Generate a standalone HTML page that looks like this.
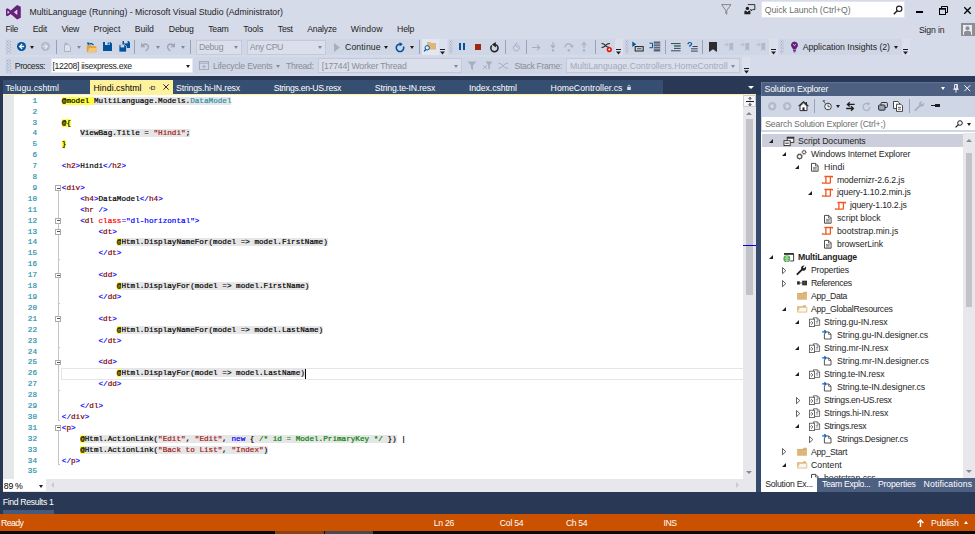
<!DOCTYPE html><html><head><meta charset="utf-8"><title>MultiLanguage (Running) - Microsoft Visual Studio (Administrator)</title><style>
*{box-sizing:border-box}
html,body{margin:0;padding:0}
body{width:975px;height:534px;overflow:hidden;position:relative;background:#D6DBE9;font-family:"Liberation Sans",sans-serif;font-size:8.7px;color:#1E1E1E;line-height:11px}
.a{position:absolute}
.t{position:absolute;white-space:pre;height:11px;line-height:11px}
.g{color:#8C8E98}
.w{color:#fff}
.sep{position:absolute;width:1px;height:14px;background:#98A1B8;top:39px}
.grip{position:absolute;width:4.4px;height:14px;background-image:radial-gradient(circle,#98A2BC 0.55px,transparent 0.8px),radial-gradient(circle,#98A2BC 0.55px,transparent 0.8px);background-size:2.9px 2.9px;background-position:0 0,1.45px 1.45px}
.dd{position:absolute;width:0;height:0;border-left:2.5px solid transparent;border-right:2.5px solid transparent;border-top:3px solid #1E1E1E}
.dd.g{border-top-color:#868995}
.ovf{position:absolute;width:5px;height:5px}
.cb{position:absolute;border:1px solid #C3CADB;background:#DADFEB;height:15px}
.cbw{position:absolute;border:1px solid #E5E9F3;background:#fff;height:15px}
.code{position:absolute;left:0;top:0;font-family:"Liberation Mono",monospace;font-size:7.652px;line-height:10.88px;white-space:pre;color:#000}
.ln{position:absolute;left:14px;width:23px;text-align:right;color:#2B91AF;-webkit-text-stroke:0.2px;font-family:"Liberation Mono",monospace;font-size:7.652px;line-height:10.905px;height:10.905px}
.cl{position:absolute;left:61.8px;height:10.905px;font-family:"Liberation Mono",monospace;font-size:7.652px;line-height:10.905px;white-space:pre;color:#000;-webkit-text-stroke:0.2px}
.y{background:#FFFF3C}
.r{background:#E6E6E6}
.b{color:#0000FF}.m{color:#800000}.rd{color:#FF0000}.s{color:#A31515}.ty{color:#2B91AF}.cm{color:#008000}
.ob{position:absolute;width:5.6px;height:5.6px;border:0.8px solid #ABABAB;background:#fff}
.ob:before{content:"";position:absolute;left:0.5px;top:1.2px;width:3px;height:0.8px;background:#555}
.ol{position:absolute;width:0.9px;background:#C6C6C6}
.tr{position:absolute;left:762px;width:201px;height:12.97px}
.tt{position:absolute;white-space:pre;line-height:12.97px;height:12.97px;top:0.4px}
.fa{position:absolute;width:0;height:0;border-left:4.9px solid transparent;border-bottom:4.7px solid #1E1E1E}
.ha{position:absolute;width:5px;height:8px}
svg{position:absolute;overflow:visible}
</style></head><body>
<svg style="left:6.4px;top:5px" width="15" height="14.5" viewBox="0 0 15 14.5"><path d="M11.1 0 L14.8 1.8 V12.7 L11.1 14.5 L4.7 8.9 L1.6 11.2 L0 10.4 V4.1 L1.6 3.3 L4.7 5.6 Z M11.3 4.5 L7.9 7.25 L11.3 10 Z M1.5 5.6 V8.9 L3.6 7.25 Z" fill="#68217A" fill-rule="evenodd"/></svg>
<span class="t " style="left:29.5px;top:7.35px;letter-spacing:0.010px;">MultiLanguage (Running) - Microsoft Visual Studio (Administrator)</span>
<svg style="left:721px;top:4px" width="11" height="11" viewBox="0 0 11 11"><path d="M0.6 0.6h9.4L5.8 6.4v3.8L4.8 9.4V6.4z" fill="none" stroke="#707070" stroke-width="0.8" stroke-linejoin="round"/></svg>
<svg style="left:743.5px;top:4px" width="12" height="11" viewBox="0 0 12 11"><path d="M3.8 0.6h7v5h-2.2l-1.4 1.4v-1.4h-1" fill="none" stroke="#1E1E1E" stroke-width="0.9"/><circle cx="3.4" cy="4.4" r="1.7" fill="#1E1E1E"/><path d="M0.4 10.2v-2.4q0-1.2 1.4-1.2l1.6 1.4l1.6-1.4q1.4 0 1.4 1.2v2.4z" fill="#1E1E1E"/></svg>
<div class="a" style="left:761.6px;top:1.8px;width:142.8px;height:14.9px;background:#fff;box-shadow:0 0 0 0.7px #E9ECF4"></div>
<span class="t " style="left:764.8px;top:5.05px;letter-spacing:-0.037px;color:#6D6D6D">Quick Launch (Ctrl+Q)</span>
<svg style="left:892.5px;top:4.5px" width="10" height="10" viewBox="0 0 10 10"><circle cx="6.2" cy="3.8" r="2.7" fill="none" stroke="#1E1E1E" stroke-width="1.1"/><path d="M4.2 5.8L0.8 9.2" stroke="#1E1E1E" stroke-width="1.5"/></svg>
<div class="a" style="left:916px;top:11px;width:7px;height:2px;background:#000;"></div>
<svg style="left:938.5px;top:5.5px" width="9" height="9" viewBox="0 0 9 9"><path d="M2.5 2.5V0.5H8.5V6.5H6.5" fill="none" stroke="#000" stroke-width="1"/><rect x="0.5" y="2.5" width="6" height="6" fill="none" stroke="#000" stroke-width="1"/><rect x="0.5" y="2.5" width="6" height="1.2" fill="#000"/></svg>
<svg style="left:964px;top:6.5px" width="7" height="7" viewBox="0 0 7 7"><path d="M0.3 0.3L6.7 6.7M6.7 0.3L0.3 6.7" stroke="#000" stroke-width="1.3"/></svg>
<span class="t " style="left:5.4px;top:24.45px;letter-spacing:-0.325px;">File</span>
<span class="t " style="left:32.7px;top:24.45px;letter-spacing:-0.196px;">Edit</span>
<span class="t " style="left:61.4px;top:24.45px;letter-spacing:-0.222px;">View</span>
<span class="t " style="left:93.6px;top:24.45px;letter-spacing:-0.050px;">Project</span>
<span class="t " style="left:134.7px;top:24.45px;letter-spacing:-0.026px;">Build</span>
<span class="t " style="left:168.8px;top:24.45px;letter-spacing:-0.162px;">Debug</span>
<span class="t " style="left:208.3px;top:24.45px;letter-spacing:-0.288px;">Team</span>
<span class="t " style="left:243.3px;top:24.45px;letter-spacing:-0.076px;">Tools</span>
<span class="t " style="left:277.8px;top:24.45px;letter-spacing:-0.259px;">Test</span>
<span class="t " style="left:307.2px;top:24.45px;letter-spacing:-0.203px;">Analyze</span>
<span class="t " style="left:350.7px;top:24.45px;letter-spacing:0.199px;">Window</span>
<span class="t " style="left:397px;top:24.45px;letter-spacing:-0.144px;">Help</span>
<span class="t " style="left:919px;top:24.95px;letter-spacing:-0.183px;">Sign in</span>
<div class="a" style="left:961px;top:23px;width:14px;height:12.5px;background:#8C8E94"></div>
<svg style="left:962.5px;top:24.5px" width="9" height="10" viewBox="0 0 9 10"><rect x="0" y="0" width="9" height="10" fill="#E9ECF3"/><circle cx="4.5" cy="3.3" r="2" fill="#8C8E94"/><path d="M1 10V8q0-2.3 3.5-2.3T8 8v2z" fill="#8C8E94"/></svg>
<div class="a" style="left:5px;top:38.6px;width:434px;height:16.5px;background:#CFD6E5;"></div>
<div class="a" style="left:447.5px;top:38.6px;width:167.0px;height:16.5px;background:#CFD6E5;"></div>
<div class="a" style="left:623px;top:38.6px;width:146px;height:16.5px;background:#CFD6E5;"></div>
<div class="a" style="left:778px;top:38.6px;width:123.5px;height:16.5px;background:#CFD6E5;"></div>
<div class="a" style="left:5px;top:57.3px;width:737px;height:16.4px;background:#CFD6E5;"></div>
<div class="a" style="left:439px;top:38.6px;width:8px;height:16.5px;background:#DCE0EC;"></div>
<div class="a" style="left:614.5px;top:38.6px;width:8.200000000000045px;height:16.5px;background:#DCE0EC;"></div>
<div class="a" style="left:769px;top:38.6px;width:8.600000000000023px;height:16.5px;background:#DCE0EC;"></div>
<div class="a" style="left:901.5px;top:38.6px;width:8.0px;height:16.5px;background:#DCE0EC;"></div>
<div class="a" style="left:742px;top:57.3px;width:8.2px;height:16.4px;background:#DCE0EC;"></div>
<div class="a" style="left:0;top:0.6px;width:975px;height:0">
<div class="grip" style="left:6.3px;top:39px;height:14px"></div>
<svg style="left:16.5px;top:41.5px" width="9" height="9" viewBox="0 0 9 9"><circle cx="4.5" cy="4.5" r="4.5" fill="#00539C"/><path d="M5.2 1.9L2.6 4.5L5.2 7.1M2.8 4.5H7.2" fill="none" stroke="#fff" stroke-width="1.3"/></svg>
<div class="dd " style="left:30.299999999999997px;top:45.0px"></div>
<svg style="left:40.5px;top:41.5px" width="9" height="9" viewBox="0 0 9 9"><circle cx="4.5" cy="4.5" r="4.5" fill="#B4B9C8"/><path d="M3.8 1.9L6.4 4.5L3.8 7.1M6.2 4.5H1.8" fill="none" stroke="#E3E6EF" stroke-width="1.3"/></svg>
<div class="sep" style="left:55.5px;top:39px;height:14px"></div>
<svg style="left:62.5px;top:41px" width="9" height="10" viewBox="0 0 9 10"><path d="M1.5 2.5h4l2 2V9.5h-6z" fill="#DDE1EC" stroke="#A9AFC1" stroke-width="0.9"/><path d="M3 0.3v3M1.5 1.8h3" stroke="#A9AFC1" stroke-width="0.9"/></svg>
<div class="dd g" style="left:77.0px;top:45.0px"></div>
<svg style="left:86px;top:41px" width="11" height="10" viewBox="0 0 11 10"><path d="M0.8 3.2h4l1 1h4.6v6h-9.6z" fill="#E0A23C"/><path d="M1.6 10.2l1.5-4.2h7.9l-1.5 4.2z" fill="#F3C574"/><path d="M3.4 2.4A2.4 2.4 0 0 1 7.4 3.2" fill="none" stroke="#00539C" stroke-width="1.2"/><path d="M0.8 0.6l3.2 0.2l-1.8 2.6z" fill="#00539C"/></svg>
<svg style="left:103px;top:41.5px" width="9" height="9" viewBox="0 0 9 9"><path d="M0 0h7.4L9 1.6V9H0z" fill="#00539C"/><rect x="2" y="0" width="4.6" height="3" fill="#D6DBE9"/><rect x="4.6" y="0.5" width="1.2" height="2" fill="#00539C"/></svg>
<svg style="left:118.5px;top:40.5px" width="11" height="11" viewBox="0 0 11 11"><path d="M3.5 0h6L11 1.5V7H3.5z" fill="#00539C"/><rect x="5" y="0" width="3.6" height="2.4" fill="#D6DBE9"/><path d="M0 3.8h6L7.5 5.3V11H0z" fill="#00539C" stroke="#D6DBE9" stroke-width="0.7"/><rect x="1.6" y="4.1" width="3.6" height="2.3" fill="#D6DBE9"/></svg>
<div class="sep" style="left:134.3px;top:39px;height:14px"></div>
<svg style="left:140.5px;top:41.5px" width="9" height="9" viewBox="0 0 9 9"><path d="M1 4.2q3-3.4 5.6-1.2q2.4 2.2-1.8 6" fill="none" stroke="#A0A6B9" stroke-width="1.5"/><path d="M0 0.6v4.6h4.6z" fill="#A0A6B9"/></svg>
<div class="dd g" style="left:155.5px;top:45.0px"></div>
<svg style="left:165.5px;top:41.5px" width="9" height="9" viewBox="0 0 9 9"><path d="M8 4.2q-3-3.4-5.6-1.2q-2.4 2.2 1.8 6" fill="none" stroke="#A0A6B9" stroke-width="1.5"/><path d="M9 0.6v4.6h-4.6z" fill="#A0A6B9"/></svg>
<div class="dd g" style="left:180.8px;top:45.0px"></div>
<div class="sep" style="left:190.2px;top:39px;height:14px"></div>
<div class="cb" style="left:195.5px;top:39px;width:46.5px"></div>
<span class="t g" style="left:199.1px;top:41.45px;letter-spacing:-0.302px;">Debug</span>
<div class="dd g" style="left:234.3px;top:45.0px"></div>
<div class="cb" style="left:246.5px;top:39px;width:79px"></div>
<span class="t g" style="left:249.8px;top:41.45px;letter-spacing:-0.362px;">Any CPU</span>
<div class="dd g" style="left:318.0px;top:45.0px"></div>
<svg style="left:333.5px;top:42px" width="6" height="9" viewBox="0 0 6 9"><path d="M0 0L6 4.5L0 9z" fill="#A9AEBF"/></svg>
<span class="t " style="left:345px;top:41.45px;letter-spacing:0.127px;">Continue</span>
<div class="dd " style="left:383.7px;top:45.0px"></div>
<svg style="left:394.6px;top:41px" width="10" height="11" viewBox="0 0 10 11"><path d="M8.5 4.6A3.7 3.7 0 1 1 5 2.1" fill="none" stroke="#00539C" stroke-width="1.6"/><path d="M4.6 0L7.8 2.3L4.6 4.6z" fill="#00539C"/></svg>
<div class="dd " style="left:409.5px;top:45.0px"></div>
<div class="sep" style="left:418.8px;top:39px;height:14px"></div>
<div class="a" style="left:422px;top:38.5px;width:17px;height:16px;background:#E3E7F1;"></div>
<svg style="left:424px;top:40.5px" width="12" height="11" viewBox="0 0 12 11"><path d="M3 1h3.4l1 1H12v6.5H3z" fill="#DCB67A"/><circle cx="3.2" cy="6.8" r="2.2" fill="#E3E7F1" stroke="#00539C" stroke-width="1"/><path d="M1.7 8.4L0.2 10.4" stroke="#00539C" stroke-width="1.3"/></svg>
<svg style="left:440.2px;top:48.5px" width="5" height="6" viewBox="0 0 5 6"><rect x="0" y="0" width="5" height="1" fill="#1E1E1E"/><path d="M0 2.5h5L2.5 5.5z" fill="#1E1E1E"/></svg>
<div class="grip" style="left:449px;top:39px;height:14px"></div>
<div class="a" style="left:459.3px;top:42.6px;width:2.1px;height:7.2px;background:#00539C;"></div>
<div class="a" style="left:462.9px;top:42.6px;width:2.1px;height:7.2px;background:#00539C;"></div>
<div class="a" style="left:475.1px;top:43.2px;width:6px;height:6.2px;background:#A1260D;"></div>
<svg style="left:489px;top:41px" width="10" height="11" viewBox="0 0 10 11"><path d="M2.8 3.6A3.6 3.6 0 1 0 6.4 2.6" fill="none" stroke="#1E1E1E" stroke-width="1.5"/><path d="M6.8 0L3 2.6L6.8 5.4z" fill="#1E1E1E"/></svg>
<div class="sep" style="left:504.8px;top:39px;height:14px"></div>
<svg style="left:511.5px;top:41.5px" width="9" height="10" viewBox="0 0 9 10"><path d="M2.2 3.8A3 3 0 1 0 5.2 3" fill="none" stroke="#A9AEBF" stroke-width="1"/><path d="M5.6 0.8L2.6 3L5.6 5.2" fill="none" stroke="#A9AEBF" stroke-width="1"/></svg>
<div class="sep" style="left:525.7px;top:39px;height:14px"></div>
<svg style="left:531.5px;top:43px" width="9" height="7" viewBox="0 0 9 7"><path d="M0 3.5h7.5M5 0.8L7.8 3.5L5 6.2" fill="none" stroke="#A9AEBF" stroke-width="1.1"/></svg>
<svg style="left:550px;top:41.5px" width="6" height="10" viewBox="0 0 6 10"><path d="M3 0v5M0.8 3.2L3 5.6L5.2 3.2" fill="none" stroke="#A9AEBF" stroke-width="1.1"/><circle cx="3" cy="8.4" r="1.2" fill="#A9AEBF"/></svg>
<svg style="left:563.5px;top:41.5px" width="10" height="10" viewBox="0 0 10 10"><path d="M1 5.5q0-3.6 3.6-3.6q3.2 0 3.4 3" fill="none" stroke="#A9AEBF" stroke-width="1.1"/><path d="M6 3.8L8.2 5.4L9.6 3.2" fill="none" stroke="#A9AEBF" stroke-width="1"/><circle cx="4.8" cy="8.4" r="1.2" fill="#A9AEBF"/></svg>
<svg style="left:581.3px;top:41.5px" width="6" height="10" viewBox="0 0 6 10"><path d="M3 6V0.8M0.8 3L3 0.6L5.2 3" fill="none" stroke="#A9AEBF" stroke-width="1.1"/><circle cx="3" cy="8.4" r="1.2" fill="#A9AEBF"/></svg>
<div class="sep" style="left:594.7px;top:39px;height:14px"></div>
<svg style="left:600.5px;top:41px" width="12" height="11" viewBox="0 0 12 11"><path d="M0.5 1.5q2.5 0 4 2t4.5 2M0.5 5.5q2.5 0 4-2t4.5-2" fill="none" stroke="#1E1E1E" stroke-width="1.1"/><circle cx="8.3" cy="7.6" r="2.6" fill="#E51400"/><circle cx="8.3" cy="7.6" r="1" fill="#fff"/></svg>
<svg style="left:616.2px;top:48.5px" width="5" height="6" viewBox="0 0 5 6"><rect x="0" y="0" width="5" height="1" fill="#1E1E1E"/><path d="M0 2.5h5L2.5 5.5z" fill="#1E1E1E"/></svg>
<div class="grip" style="left:625px;top:39px;height:14px"></div>
<svg style="left:631.5px;top:40.5px" width="12" height="11" viewBox="0 0 12 11"><path d="M0.3 0.5L4.2 3.2L0.3 6z" fill="#00539C"/><rect x="3.2" y="5.6" width="8" height="4.4" fill="#D6DBE9" stroke="#1E1E1E" stroke-width="1"/><path d="M5 7.8h4.5" stroke="#1E1E1E" stroke-width="0.8"/></svg>
<svg style="left:648.5px;top:40.5px" width="12" height="11" viewBox="0 0 12 11"><path d="M0.5 2.2h3v4.5h-3" fill="none" stroke="#00539C" stroke-width="1"/><rect x="4.8" y="0.5" width="6.4" height="10" fill="#5B6273"/><path d="M4.8 3h6.4M4.8 5.4h6.4M4.8 7.8h6.4" stroke="#D6DBE9" stroke-width="0.7"/></svg>
<div class="sep" style="left:664.6px;top:39px;height:14px"></div>
<svg style="left:671px;top:42px" width="10" height="9" viewBox="0 0 10 9"><path d="M0 0.6h9.6M3 3h6.6M3 5.4h6.6M0 7.8h9.6" stroke="#3C4356" stroke-width="1"/><path d="M3 3h6.6" stroke="#2E8B57" stroke-width="1"/></svg>
<svg style="left:686.5px;top:41px" width="11" height="10" viewBox="0 0 11 10"><path d="M1 2.2q0-1.7 1.8-1.7t1.8 1.5q0 1-1.8 1.8v1" fill="none" stroke="#00539C" stroke-width="1.2"/><path d="M5.5 4.5h5.2M4 6.8h6.7M4 9.1h6.7" stroke="#3C4356" stroke-width="1"/></svg>
<div class="sep" style="left:702px;top:39px;height:14px"></div>
<svg style="left:709px;top:41px" width="8" height="10" viewBox="0 0 8 10"><path d="M0 0h8v10L4 7.2L0 10z" fill="#2D2D30"/></svg>
<svg style="left:724px;top:41.5px" width="10" height="9" viewBox="0 0 10 9"><path d="M5.4 1h3.8v8L7.3 7.2L5.4 9z" fill="#B3B8C8"/><path d="M0.5 2.6h3.4M2.4 0.8L4.2 2.6L2.4 4.4" fill="none" stroke="#B3B8C8" stroke-width="0.9"/></svg>
<svg style="left:739.8px;top:41.5px" width="10" height="9" viewBox="0 0 10 9"><path d="M5.4 1h3.8v8L7.3 7.2L5.4 9z" fill="#B3B8C8"/><path d="M0.5 2.6h3.4M2.4 0.8L4.2 2.6L2.4 4.4" fill="none" stroke="#B3B8C8" stroke-width="0.9"/></svg>
<svg style="left:755.8px;top:41.5px" width="10" height="9" viewBox="0 0 10 9"><path d="M5.4 1h3.8v8L7.3 7.2L5.4 9z" fill="#B3B8C8"/><path d="M0.5 2.6h3.4M2.4 0.8L4.2 2.6L2.4 4.4" fill="none" stroke="#B3B8C8" stroke-width="0.9"/></svg>
<svg style="left:770.9px;top:48.5px" width="5" height="6" viewBox="0 0 5 6"><rect x="0" y="0" width="5" height="1" fill="#1E1E1E"/><path d="M0 2.5h5L2.5 5.5z" fill="#1E1E1E"/></svg>
<div class="grip" style="left:779.5px;top:39px;height:14px"></div>
<svg style="left:789.5px;top:40.5px" width="9" height="12" viewBox="0 0 9 12"><path d="M4.5 0.5a3.6 3.6 0 0 1 2.2 6.4q-0.6 0.6-0.6 1.6H2.9q0-1-0.6-1.6A3.6 3.6 0 0 1 4.5 0.5z" fill="#68217A"/><path d="M3 9.4h3M3.4 10.8h2.2" stroke="#68217A" stroke-width="1"/><path d="M3.3 3.2l1.2 1.6l1.2-1.6" fill="none" stroke="#fff" stroke-width="0.7"/></svg>
<span class="t " style="left:802.7px;top:41.45px;letter-spacing:-0.025px;">Application Insights (2)</span>
<div class="dd " style="left:893.8px;top:45.0px"></div>
<svg style="left:903.2px;top:48.5px" width="5" height="6" viewBox="0 0 5 6"><rect x="0" y="0" width="5" height="1" fill="#1E1E1E"/><path d="M0 2.5h5L2.5 5.5z" fill="#1E1E1E"/></svg>
</div>
<div class="grip" style="left:6.3px;top:58.5px;height:14px"></div>
<span class="t " style="left:14.8px;top:61.05px;letter-spacing:-0.450px;">Process:</span>
<div class="cbw" style="left:50.5px;top:58.3px;width:142.5px"></div>
<span class="t " style="left:52.5px;top:61.05px;letter-spacing:-0.330px;">[12208] iisexpress.exe</span>
<div class="dd " style="left:185.9px;top:64.5px"></div>
<svg style="left:198.8px;top:61.2px" width="10" height="9" viewBox="0 0 10 9"><rect x="0.5" y="0.5" width="9" height="8" fill="none" stroke="#A0A6B9" stroke-width="0.9"/><path d="M0.5 2.2h9" stroke="#A0A6B9" stroke-width="0.9"/><path d="M5.8 4L3.6 5.6L5.8 7.2M3.8 5.6h3" fill="none" stroke="#A0A6B9" stroke-width="0.8"/></svg>
<span class="t g" style="left:213px;top:61.05px;letter-spacing:-0.205px;">Lifecycle Events</span>
<div class="dd g" style="left:276.1px;top:64.5px"></div>
<span class="t g" style="left:286px;top:61.05px;letter-spacing:-0.336px;">Thread:</span>
<div class="cb" style="left:318px;top:58.3px;width:144px"></div>
<span class="t g" style="left:321.7px;top:61.05px;letter-spacing:-0.197px;">[17744] Worker Thread</span>
<div class="dd g" style="left:454.3px;top:64.5px"></div>
<svg style="left:466.5px;top:61px" width="10" height="10" viewBox="0 0 10 10"><path d="M0.5 0.5h9L6 4.6v4.6L4 7.6v-3z" fill="#A9AEBF"/></svg>
<svg style="left:482.5px;top:61px" width="10" height="10" viewBox="0 0 10 10"><path d="M2.5 0.5h7L6.8 4v4.6L5.2 7.4V4z" fill="#A9AEBF"/><path d="M0 4.4L4 8M4 4.4L0 8" stroke="#A9AEBF" stroke-width="0.9"/></svg>
<svg style="left:498px;top:62px" width="11" height="8" viewBox="0 0 11 8"><path d="M0.5 1.2q2.5 0 4.5 2.6t5 2.6M0.5 6.4q2.5 0 4.5-2.6t5-2.6" fill="none" stroke="#A9AEBF" stroke-width="1"/></svg>
<span class="t g" style="left:514.6px;top:61.05px;letter-spacing:-0.355px;">Stack Frame:</span>
<div class="cb" style="left:566.3px;top:58.3px;width:173.3px"></div>
<span class="t " style="left:570px;top:61.05px;letter-spacing:0.017px;color:#A4A9BA">MultiLanguage.Controllers.HomeControll</span>
<div class="dd g" style="left:731.3px;top:64.5px"></div>
<svg style="left:743.5px;top:67.5px" width="5" height="6" viewBox="0 0 5 6"><rect x="0" y="0" width="5" height="1" fill="#1E1E1E"/><path d="M0 2.5h5L2.5 5.5z" fill="#1E1E1E"/></svg>
<div class="a" style="left:0px;top:75.7px;width:975px;height:438.6px;background:#293955;"></div>
<div class="a" style="left:2.6px;top:80.4px;width:660.4px;height:13.2px;background:#364E6F;"></div>
<span class="t w" style="left:5.4px;top:82.55px;letter-spacing:0.037px;">Telugu.cshtml</span>
<div class="a" style="left:89.8px;top:79.9px;width:82.8px;height:14px;background:#FFF29D;"></div>
<span class="t " style="left:93.5px;top:82.55px;letter-spacing:0.066px;color:#000">Hindi.cshtml</span>
<svg style="left:148.5px;top:84.5px" width="7" height="6" viewBox="0 0 7 6"><path d="M0 3h2.6M2.6 0.8v4.4M2.6 1.6h3.2v2.2M2.6 4.4h3.2" fill="none" stroke="#444" stroke-width="0.8"/></svg>
<svg style="left:162.5px;top:84.3px" width="6" height="6" viewBox="0 0 6 6"><path d="M0.3 0.3L5.7 5.7M5.7 0.3L0.3 5.7" stroke="#1E1E1E" stroke-width="0.9"/></svg>
<span class="t w" style="left:176px;top:82.55px;letter-spacing:-0.146px;">Strings.hi-IN.resx</span>
<span class="t w" style="left:273.7px;top:82.55px;letter-spacing:-0.311px;">Strings.en-US.resx</span>
<span class="t w" style="left:374.8px;top:82.55px;letter-spacing:-0.145px;">String.te-IN.resx</span>
<span class="t w" style="left:469px;top:82.55px;letter-spacing:-0.080px;">Index.cshtml</span>
<span class="t w" style="left:550.6px;top:82.55px;letter-spacing:0.025px;">HomeController.cs</span>
<svg style="left:627px;top:84.5px" width="4" height="5" viewBox="0 0 4 5"><rect x="0.2" y="2" width="3.6" height="3" fill="#D8DDE8"/><path d="M1 2V1.2a1 1 0 0 1 2 0V2" fill="none" stroke="#D8DDE8" stroke-width="0.7"/></svg>
<div class="dd" style="left:748px;top:86px;border-top-color:#fff;border-left-width:3.2px;border-right-width:3.2px;border-top-width:3.4px"></div>
<div class="a" style="left:2.6px;top:93.6px;width:753.4px;height:1.6px;background:#FFF29D;"></div>
<div class="a" style="left:2.6px;top:94.8px;width:753.4px;height:397px;background:#fff;"></div>
<div class="a" style="left:2.6px;top:94.8px;width:11.6px;height:383.8px;background:#E6E7E8;"></div>
<div class="a" style="left:61px;top:368.02px;width:682px;height:11.50px;border:1px solid #E4E4EA;border-right:0"></div>
<div class="ln" style="top:95.70px">1</div>
<div class="cl" style="top:95.70px"><span class="y">@model </span><span class="r">MultiLanguage.Models.<span class="ty">DataModel</span></span></div>
<div class="ln" style="top:106.60px">2</div>
<div class="ln" style="top:117.51px">3</div>
<div class="cl" style="top:117.51px"><span class="y">@{</span></div>
<div class="ln" style="top:128.41px">4</div>
<div class="cl" style="top:128.41px">    <span class="r">ViewBag.Title = <span class="s">&quot;Hindi&quot;</span>;</span></div>
<div class="ln" style="top:139.32px">5</div>
<div class="cl" style="top:139.32px"><span class="y">}</span></div>
<div class="ln" style="top:150.22px">6</div>
<div class="ln" style="top:161.13px">7</div>
<div class="cl" style="top:161.13px"><span class="b">&lt;</span><span class="m">h2</span><span class="b">&gt;</span>Hindi<span class="b">&lt;/</span><span class="m">h2</span><span class="b">&gt;</span></div>
<div class="ln" style="top:172.03px">8</div>
<div class="ln" style="top:182.94px">9</div>
<div class="cl" style="top:182.94px"><span class="b">&lt;</span><span class="m">div</span><span class="b">&gt;</span></div>
<div class="ln" style="top:193.84px">10</div>
<div class="cl" style="top:193.84px">    <span class="b">&lt;</span><span class="m">h4</span><span class="b">&gt;</span>DataModel<span class="b">&lt;/</span><span class="m">h4</span><span class="b">&gt;</span></div>
<div class="ln" style="top:204.75px">11</div>
<div class="cl" style="top:204.75px">    <span class="b">&lt;</span><span class="m">hr</span><span class="b"> /&gt;</span></div>
<div class="ln" style="top:215.65px">12</div>
<div class="cl" style="top:215.65px">    <span class="b">&lt;</span><span class="m">dl</span> <span class="rd">class</span><span class="b">=&quot;dl-horizontal&quot;&gt;</span></div>
<div class="ln" style="top:226.56px">13</div>
<div class="cl" style="top:226.56px">        <span class="b">&lt;</span><span class="m">dt</span><span class="b">&gt;</span></div>
<div class="ln" style="top:237.46px">14</div>
<div class="cl" style="top:237.46px">            <span class="y">@</span><span class="r">Html.DisplayNameFor(model =&gt; model.FirstName)</span></div>
<div class="ln" style="top:248.37px">15</div>
<div class="cl" style="top:248.37px">        <span class="b">&lt;/</span><span class="m">dt</span><span class="b">&gt;</span></div>
<div class="ln" style="top:259.27px">16</div>
<div class="ln" style="top:270.18px">17</div>
<div class="cl" style="top:270.18px">        <span class="b">&lt;</span><span class="m">dd</span><span class="b">&gt;</span></div>
<div class="ln" style="top:281.08px">18</div>
<div class="cl" style="top:281.08px">            <span class="y">@</span><span class="r">Html.DisplayFor(model =&gt; model.FirstName)</span></div>
<div class="ln" style="top:291.99px">19</div>
<div class="cl" style="top:291.99px">        <span class="b">&lt;/</span><span class="m">dd</span><span class="b">&gt;</span></div>
<div class="ln" style="top:302.89px">20</div>
<div class="ln" style="top:313.80px">21</div>
<div class="cl" style="top:313.80px">        <span class="b">&lt;</span><span class="m">dt</span><span class="b">&gt;</span></div>
<div class="ln" style="top:324.70px">22</div>
<div class="cl" style="top:324.70px">            <span class="y">@</span><span class="r">Html.DisplayNameFor(model =&gt; model.LastName)</span></div>
<div class="ln" style="top:335.61px">23</div>
<div class="cl" style="top:335.61px">        <span class="b">&lt;/</span><span class="m">dt</span><span class="b">&gt;</span></div>
<div class="ln" style="top:346.51px">24</div>
<div class="ln" style="top:357.42px">25</div>
<div class="cl" style="top:357.42px">        <span class="b">&lt;</span><span class="m">dd</span><span class="b">&gt;</span></div>
<div class="ln" style="top:368.32px">26</div>
<div class="cl" style="top:368.32px">            <span class="y">@</span><span class="r">Html.DisplayFor(model =&gt; model.LastName)</span></div>
<div class="ln" style="top:379.23px">27</div>
<div class="cl" style="top:379.23px">        <span class="b">&lt;/</span><span class="m">dd</span><span class="b">&gt;</span></div>
<div class="ln" style="top:390.13px">28</div>
<div class="ln" style="top:401.04px">29</div>
<div class="cl" style="top:401.04px">    <span class="b">&lt;/</span><span class="m">dl</span><span class="b">&gt;</span></div>
<div class="ln" style="top:411.94px">30</div>
<div class="cl" style="top:411.94px"><span class="b">&lt;/</span><span class="m">div</span><span class="b">&gt;</span></div>
<div class="ln" style="top:422.85px">31</div>
<div class="cl" style="top:422.85px"><span class="b">&lt;</span><span class="m">p</span><span class="b">&gt;</span></div>
<div class="ln" style="top:433.75px">32</div>
<div class="cl" style="top:433.75px">    <span class="y">@</span><span class="r">Html.ActionLink(<span class="s">&quot;Edit&quot;</span>, <span class="s">&quot;Edit&quot;</span>, <span class="b">new</span> { <span class="cm">/* id = Model.PrimaryKey */</span> })</span> |</div>
<div class="ln" style="top:444.66px">33</div>
<div class="cl" style="top:444.66px">    <span class="y">@</span><span class="r">Html.ActionLink(<span class="s">&quot;Back to List&quot;</span>, <span class="s">&quot;Index&quot;</span>)</span></div>
<div class="ln" style="top:455.56px">34</div>
<div class="cl" style="top:455.56px"><span class="b">&lt;/</span><span class="m">p</span><span class="b">&gt;</span></div>
<div class="ln" style="top:466.47px">35</div>
<div class="a" style="left:304.9px;top:368.92px;width:0.9px;height:9.6px;background:#000"></div>
<div class="ol" style="left:57.5px;top:188.39px;height:232.00px"></div>
<div class="ol" style="left:57.9px;top:420.00px;height:0.8px;width:2.5px"></div>
<div class="ol" style="left:57.5px;top:428.30px;height:35.71px"></div>
<div class="ol" style="left:57.9px;top:463.61px;height:0.8px;width:2.5px"></div>
<div class="ob" style="left:55.1px;top:185.39px"></div>
<div class="ob" style="left:55.1px;top:218.10px"></div>
<div class="ob" style="left:55.1px;top:229.01px"></div>
<div class="ob" style="left:55.1px;top:272.63px"></div>
<div class="ob" style="left:55.1px;top:316.25px"></div>
<div class="ob" style="left:55.1px;top:359.87px"></div>
<div class="ob" style="left:55.1px;top:425.30px"></div>
<div class="ol" style="left:57.9px;top:259.32px;height:0.8px;width:2.6px"></div>
<div class="ol" style="left:57.9px;top:302.94px;height:0.8px;width:2.6px"></div>
<div class="ol" style="left:57.9px;top:346.56px;height:0.8px;width:2.6px"></div>
<div class="ol" style="left:57.9px;top:390.19px;height:0.8px;width:2.6px"></div>
<div class="a" style="left:743px;top:94.8px;width:13px;height:383.8px;background:#E8E8EC;"></div>
<div class="a" style="left:743.3px;top:95px;width:12.5px;height:12px;background:#F5F5F8;border:1px solid #CCCEDB"></div>
<svg style="left:745.5px;top:96.5px" width="8" height="9" viewBox="0 0 8 9"><path d="M0 4.5h8" stroke="#1E1E1E" stroke-width="1"/><path d="M4 0.5v2.6M4 8.5V5.9" stroke="#1E1E1E" stroke-width="0.9"/><path d="M2.6 1.8L4 0.3L5.4 1.8M2.6 7.2L4 8.7L5.4 7.2" fill="none" stroke="#1E1E1E" stroke-width="0.8"/></svg>
<div class="a" style="left:746.3px;top:112px;width:0;height:0;border-left:3.2px solid transparent;border-right:3.2px solid transparent;border-bottom:3.2px solid #868999"></div>
<div class="a" style="left:746.3px;top:119.4px;width:6.6px;height:175.2px;background:#C2C3C9;"></div>
<div class="a" style="left:743px;top:245px;width:13px;height:1px;background:#0000E0;"></div>
<div class="a" style="left:746.3px;top:471.3px;width:0;height:0;border-left:3.2px solid transparent;border-right:3.2px solid transparent;border-top:3.2px solid #868999"></div>
<div class="a" style="left:3px;top:478.6px;width:753px;height:13.1px;background:#E8E8EC;"></div>
<div class="a" style="left:3px;top:479.2px;width:42.5px;height:12.2px;background:#fff;"></div>
<span class="t " style="left:3.8px;top:480.95px;letter-spacing:-0.253px;color:#000">89 %</span>
<div class="dd " style="left:38.8px;top:484.5px"></div>
<div class="a" style="left:50.5px;top:482.3px;width:0;height:0;border-top:3.2px solid transparent;border-bottom:3.2px solid transparent;border-right:3.2px solid #C8C9D2"></div>
<div class="a" style="left:735.5px;top:481.8px;width:0;height:0;border-top:3.2px solid transparent;border-bottom:3.2px solid transparent;border-left:3.2px solid #C8C9D2"></div>
<div class="a" style="left:756px;top:95px;width:5px;height:396.7px;background:#35496A;"></div>
<div class="a" style="left:761px;top:81.6px;width:214px;height:14.2px;background:#4D6082;border-left:0.8px solid #6478A0;border-top:0.8px solid #5D7198"></div>
<span class="t w" style="left:764.5px;top:83.85px;letter-spacing:-0.140px;">Solution Explorer</span>
<div class="dd" style="left:940.6px;top:87px;border-top-color:#fff;border-left-width:2.8px;border-right-width:2.8px;border-top-width:3px"></div>
<svg style="left:952.5px;top:84px" width="6" height="9" viewBox="0 0 6 9"><path d="M1.6 0.5h2.8v4.6h-2.8zM0.2 5.2h5.6M3 5.2v3.4" fill="none" stroke="#fff" stroke-width="0.9"/><path d="M3.8 0.5v4.6" stroke="#fff" stroke-width="0.9"/></svg>
<svg style="left:963.8px;top:85.3px" width="6.5" height="6.5" viewBox="0 0 6.5 6.5"><path d="M0.3 0.3L6.2 6.2M6.2 0.3L0.3 6.2" stroke="#fff" stroke-width="1"/></svg>
<div class="a" style="left:761px;top:95.8px;width:214px;height:37.5px;background:#CFD6E5;"></div>
<svg style="left:768.3px;top:101.5px" width="8.4" height="8.4" viewBox="0 0 8.4 8.4"><circle cx="4.2" cy="4.2" r="4.2" fill="#B4B9C8"/><path d="M5 2.2L2.8 4.2L5 6.2M3 4.2H6.2" fill="none" stroke="#DDE2EC" stroke-width="1.1"/></svg>
<svg style="left:783.3px;top:101.5px" width="8.4" height="8.4" viewBox="0 0 8.4 8.4"><circle cx="4.2" cy="4.2" r="4.2" fill="#B4B9C8"/><path d="M3.4 2.2L5.6 4.2L3.4 6.2M5.4 4.2H2.2" fill="none" stroke="#DDE2EC" stroke-width="1.1"/></svg>
<svg style="left:798px;top:100.5px" width="11" height="10" viewBox="0 0 11 10"><path d="M0.6 5.2L5.5 0.7L10.4 5.2" fill="none" stroke="#1E1E1E" stroke-width="1.1"/><path d="M2 5v4.6h7V5L5.5 2z" fill="#fff" stroke="#1E1E1E" stroke-width="0.9"/><rect x="4.5" y="6.4" width="2" height="3.2" fill="#1E1E1E"/><rect x="7.6" y="1" width="1.3" height="2.4" fill="#1E1E1E"/></svg>
<div class="sep" style="left:814.3px;top:99px;height:14px"></div>
<svg style="left:821.5px;top:100.3px" width="10" height="11" viewBox="0 0 10 11"><circle cx="6" cy="6.5" r="3.3" fill="#F3F5F9" stroke="#1E1E1E" stroke-width="0.85"/><path d="M6 4.6v2.1h1.7" fill="none" stroke="#1E1E1E" stroke-width="0.8"/><path d="M0.4 0.4h3L1.9 2z" fill="#1E1E1E"/><path d="M1.9 2l1.6 1.6" stroke="#1E1E1E" stroke-width="0.7"/></svg>
<div class="dd " style="left:835.6px;top:104.8px"></div>
<svg style="left:846.2px;top:101.8px" width="9" height="9" viewBox="0 0 9 9"><path d="M8.6 2.4H1.6M3.8 0.2L1.4 2.4L3.8 4.6M0.2 6.5H7.2M5 4.3L7.4 6.5L5 8.7" fill="none" stroke="#1E1E1E" stroke-width="1.3"/></svg>
<svg style="left:861.6px;top:101.6px" width="9" height="10" viewBox="0 0 9 10"><path d="M6.6 2.2A3.5 3.5 0 1 0 8 5" fill="none" stroke="#AAB0C1" stroke-width="1.2"/><path d="M4.8 0.2L8.2 1.2L6 3.8z" fill="#AAB0C1"/></svg>
<svg style="left:877.5px;top:101.5px" width="10" height="9" viewBox="0 0 10 9"><rect x="3" y="0.5" width="6.4" height="5" rx="1" fill="#CFD6E5" stroke="#1E1E1E" stroke-width="0.9"/><rect x="0.6" y="3" width="6.4" height="5.2" rx="1" fill="#9CA3B7" stroke="#1E1E1E" stroke-width="0.9"/></svg>
<svg style="left:893px;top:100.5px" width="10" height="11" viewBox="0 0 10 11"><path d="M0.5 0.5h4.4l1.6 1.6v5.4h-6z" fill="#fff" stroke="#1E1E1E" stroke-width="0.8"/><path d="M3.5 3.2h4.4l1.6 1.6v5.6h-6z" fill="#fff" stroke="#1E1E1E" stroke-width="0.8"/><path d="M5 6.4h3M5 8.2h3" stroke="#1E1E1E" stroke-width="0.7"/></svg>
<div class="sep" style="left:908.5px;top:99px;height:14px"></div>
<svg style="left:913.8px;top:101px" width="11" height="10" viewBox="0 0 11 10"><path d="M1.4 9.2L6.2 4.4" stroke="#AAB0C1" stroke-width="1.9" stroke-linecap="round"/><path d="M9.8 1.6L8 3.4L6.9 2.3L8.7 0.6A2.7 2.7 0 0 0 5.3 4.2L6.6 5.5A2.7 2.7 0 0 0 9.8 1.6z" fill="#AAB0C1"/></svg>
<div class="a" style="left:930.5px;top:105.4px;width:4.5px;height:1px;background:#1E1E1E;"></div>
<div class="a" style="left:934.5px;top:104.4px;width:5.8px;height:2.6px;background:#1E1E1E;"></div>
<div class="a" style="left:762px;top:117px;width:213px;height:13.1px;background:#fff;"></div>
<span class="t " style="left:765.2px;top:119.05px;letter-spacing:-0.151px;color:#6D6D6D">Search Solution Explorer (Ctrl+;)</span>
<svg style="left:955px;top:119.5px" width="8" height="8" viewBox="0 0 8 8"><circle cx="5" cy="3" r="2.3" fill="none" stroke="#1E1E1E" stroke-width="1"/><path d="M3.4 4.6L0.6 7.4" stroke="#1E1E1E" stroke-width="1.3"/></svg>
<div class="dd " style="left:967.0px;top:123.0px"></div>
<div class="a" style="left:761px;top:131.6px;width:214px;height:347px;background:#fff;"></div>
<div class="a" style="left:963px;top:133.3px;width:12px;height:345.3px;background:#E8E8EC;"></div>
<div class="a" style="left:965.8px;top:138.8px;width:0;height:0;border-left:3.2px solid transparent;border-right:3.2px solid transparent;border-bottom:3.2px solid #868999"></div>
<div class="a" style="left:966.2px;top:152.8px;width:5.8px;height:154.7px;background:#C2C3C9;"></div>
<div class="a" style="left:965.8px;top:469.8px;width:0;height:0;border-left:3.2px solid transparent;border-right:3.2px solid transparent;border-top:3.2px solid #868999"></div>
<div class="a" style="left:762px;top:133.3px;width:201px;height:344.6px;overflow:hidden">
<div class="tr" style="left:0;top:0.91px;background:#CCCEDB;">
<div class="fa" style="left:7.1px;top:4.49px"></div>
<svg style="left:20.8px;top:1.49px" width="11" height="10" viewBox="0 0 11 10"><rect x="4.2" y="1.2" width="6.6" height="5.2" fill="#F5F5F5" stroke="#2B2B2B" stroke-width="0.9"/><rect x="4.2" y="1.2" width="6.6" height="1.5" fill="#2B2B2B"/><rect x="1" y="4.7" width="6.2" height="4.9" fill="#fff" stroke="#2B2B2B" stroke-width="0.9"/><path d="M2.2 7.2h3.6" stroke="#2B2B2B" stroke-width="1"/></svg>
<span class="tt" style="left:35.9px;letter-spacing:-0.054px;">Script Documents</span>
</div>
<div class="tr" style="left:0;top:13.88px;">
<div class="fa" style="left:20.1px;top:4.49px"></div>
<svg style="left:33.8px;top:1.49px" width="11" height="10" viewBox="0 0 11 10"><circle cx="3.6" cy="7.5" r="2.1" fill="none" stroke="#5A5A5A" stroke-width="1.1"/><circle cx="3.6" cy="7.5" r="2.9" fill="none" stroke="#4A4A4A" stroke-width="0.7" stroke-dasharray="0.9 1.1"/><circle cx="8.1" cy="3.2" r="1.6" fill="none" stroke="#4A4A4A" stroke-width="0.9"/><circle cx="8.1" cy="3.2" r="2.3" fill="none" stroke="#4A4A4A" stroke-width="0.6" stroke-dasharray="0.8 1"/></svg>
<span class="tt" style="left:48.9px;letter-spacing:-0.101px;">Windows Internet Explorer</span>
</div>
<div class="tr" style="left:0;top:26.85px;">
<div class="fa" style="left:33.2px;top:4.49px"></div>
<svg style="left:46.9px;top:1.49px" width="11" height="10" viewBox="0 0 11 10"><path d="M2.5 1.4h4.2l2.4 2.4v5.4h-6.6z" fill="#fff" stroke="#3A3A3A" stroke-width="0.9"/><path d="M6.5 1.4v2.6h2.6" fill="none" stroke="#3A3A3A" stroke-width="0.7"/><path d="M3.9 5.4h3.8M3.9 6.7h3.8M3.9 8h3.8" stroke="#3A3A3A" stroke-width="0.6"/></svg>
<span class="tt" style="left:62.0px;letter-spacing:0.166px;">Hindi</span>
</div>
<div class="tr" style="left:0;top:39.82px;">
<svg style="left:59.9px;top:1.49px" width="11" height="10" viewBox="0 0 11 10"><path d="M2.4 1.5H10.4V2.6M3.9 1.5V8.2M8.4 1.5V8.2M0.5 7.2V8.2H8.4" fill="none" stroke="#F0571E" stroke-width="1.3" stroke-linejoin="round"/></svg>
<span class="tt" style="left:75.0px;letter-spacing:-0.118px;">modernizr-2.6.2.js</span>
</div>
<div class="tr" style="left:0;top:52.79px;">
<div class="fa" style="left:46.2px;top:4.49px"></div>
<svg style="left:59.9px;top:1.49px" width="11" height="10" viewBox="0 0 11 10"><path d="M2.4 1.5H10.4V2.6M3.9 1.5V8.2M8.4 1.5V8.2M0.5 7.2V8.2H8.4" fill="none" stroke="#F0571E" stroke-width="1.3" stroke-linejoin="round"/></svg>
<span class="tt" style="left:75.0px;letter-spacing:-0.105px;">jquery-1.10.2.min.js</span>
</div>
<div class="tr" style="left:0;top:65.76px;">
<svg style="left:72.9px;top:1.49px" width="11" height="10" viewBox="0 0 11 10"><path d="M2.4 1.5H10.4V2.6M3.9 1.5V8.2M8.4 1.5V8.2M0.5 7.2V8.2H8.4" fill="none" stroke="#F0571E" stroke-width="1.3" stroke-linejoin="round"/></svg>
<span class="tt" style="left:88.0px;letter-spacing:-0.177px;">jquery-1.10.2.js</span>
</div>
<div class="tr" style="left:0;top:78.73px;">
<svg style="left:59.9px;top:1.49px" width="11" height="10" viewBox="0 0 11 10"><path d="M2.5 1.4h4.2l2.4 2.4v5.4h-6.6z" fill="#fff" stroke="#3A3A3A" stroke-width="0.9"/><path d="M6.5 1.4v2.6h2.6" fill="none" stroke="#3A3A3A" stroke-width="0.7"/><path d="M3.9 5.4h3.8M3.9 6.7h3.8M3.9 8h3.8" stroke="#3A3A3A" stroke-width="0.6"/></svg>
<span class="tt" style="left:75.0px;letter-spacing:0.021px;">script block</span>
</div>
<div class="tr" style="left:0;top:91.70px;">
<svg style="left:59.9px;top:1.49px" width="11" height="10" viewBox="0 0 11 10"><path d="M2.4 1.5H10.4V2.6M3.9 1.5V8.2M8.4 1.5V8.2M0.5 7.2V8.2H8.4" fill="none" stroke="#F0571E" stroke-width="1.3" stroke-linejoin="round"/></svg>
<span class="tt" style="left:75.0px;letter-spacing:-0.001px;">bootstrap.min.js</span>
</div>
<div class="tr" style="left:0;top:104.67px;">
<svg style="left:59.9px;top:1.49px" width="11" height="10" viewBox="0 0 11 10"><path d="M2.5 1.4h4.2l2.4 2.4v5.4h-6.6z" fill="#fff" stroke="#3A3A3A" stroke-width="0.9"/><path d="M6.5 1.4v2.6h2.6" fill="none" stroke="#3A3A3A" stroke-width="0.7"/><path d="M3.9 5.4h3.8M3.9 6.7h3.8M3.9 8h3.8" stroke="#3A3A3A" stroke-width="0.6"/></svg>
<span class="tt" style="left:75.0px;letter-spacing:-0.076px;">browserLink</span>
</div>
<div class="tr" style="left:0;top:117.64px;">
<div class="fa" style="left:7.1px;top:4.49px"></div>
<svg style="left:20.8px;top:1.49px" width="11" height="10" viewBox="0 0 11 10"><path d="M1 1.6h9.6v7.4h-3.4" fill="none" stroke="#2B2B2B" stroke-width="0.9"/><rect x="1" y="1.2" width="9.6" height="1.6" fill="#2B2B2B"/><circle cx="3.8" cy="6.7" r="3.4" fill="#3FA037"/><path d="M0.6 6.7h6.4M3.8 3.5v6.4M1.6 4.7q2.2 1 4.4 0M1.6 8.7q2.2-1 4.4 0M3.8 3.5q-2.4 3.2 0 6.4M3.8 3.5q2.4 3.2 0 6.4" fill="none" stroke="#CDEBC9" stroke-width="0.5"/></svg>
<span class="tt" style="left:35.9px;letter-spacing:-0.169px;font-weight:bold;">MultiLanguage</span>
</div>
<div class="tr" style="left:0;top:130.61px;">
<svg style="left:20.4px;top:2.99px" width="5" height="8" viewBox="0 0 5 8"><path d="M0.5 0.5L3.8 3.6L0.5 6.7z" fill="#fff" stroke="#3A3A3A" stroke-width="0.8"/></svg>
<svg style="left:33.8px;top:1.49px" width="11" height="10" viewBox="0 0 11 10"><path d="M1.4 9.2L6.2 4.4" stroke="#1E1E1E" stroke-width="1.9" stroke-linecap="round"/><path d="M9.8 1.6L8 3.4L6.9 2.3L8.7 0.6A2.7 2.7 0 0 0 5.3 4.2L6.6 5.5A2.7 2.7 0 0 0 9.8 1.6z" fill="#1E1E1E"/></svg>
<span class="tt" style="left:48.9px;letter-spacing:-0.164px;">Properties</span>
</div>
<div class="tr" style="left:0;top:143.58px;">
<svg style="left:20.4px;top:2.99px" width="5" height="8" viewBox="0 0 5 8"><path d="M0.5 0.5L3.8 3.6L0.5 6.7z" fill="#fff" stroke="#3A3A3A" stroke-width="0.8"/></svg>
<svg style="left:33.8px;top:1.49px" width="11" height="10" viewBox="0 0 11 10"><rect x="1.1" y="3.3" width="2.7" height="3.3" fill="#2B2B2B"/><path d="M3.8 5h2.6" stroke="#2B2B2B" stroke-width="0.8"/><rect x="6.2" y="2.7" width="4.8" height="4.6" fill="#2B2B2B"/><path d="M6.2 5h4.8M8.6 2.7v4.6" stroke="#777" stroke-width="0.35"/></svg>
<span class="tt" style="left:48.9px;letter-spacing:-0.357px;">References</span>
</div>
<div class="tr" style="left:0;top:156.55px;">
<svg style="left:33.8px;top:1.49px" width="11" height="10" viewBox="0 0 11 10"><path d="M1.1 1.9h5.6l0.9-1.1h3.3v7.9h-9.8z" fill="#DCB67A"/><path d="M1.1 2.4h9.8" stroke="#CBA468" stroke-width="0.5"/></svg>
<span class="tt" style="left:48.9px;letter-spacing:-0.309px;">App_Data</span>
</div>
<div class="tr" style="left:0;top:169.52px;">
<div class="fa" style="left:20.1px;top:4.49px"></div>
<svg style="left:33.8px;top:1.49px" width="11" height="10" viewBox="0 0 11 10"><path d="M1.1 2.3h5.6l0.9-1h2.4v1.8h-6.6l-2.3 4.6z" fill="#DCB67A"/><path d="M3.6 3.4h7.2v4.7h-9.5z" fill="#FBF6EC" stroke="#DCB67A" stroke-width="0.8"/></svg>
<span class="tt" style="left:48.9px;letter-spacing:-0.277px;">App_GlobalResources</span>
</div>
<div class="tr" style="left:0;top:182.49px;">
<div class="fa" style="left:33.2px;top:4.49px"></div>
<svg style="left:46.9px;top:1.49px" width="11" height="10" viewBox="0 0 11 10"><path d="M4.4 0.8h4l2.2 2.2v5.4h-6.2z" fill="#fff" stroke="#4A4A4A" stroke-width="0.8"/><path d="M8.2 0.8v2.4h2.4" fill="none" stroke="#4A4A4A" stroke-width="0.6"/><rect x="0.5" y="2.2" width="5" height="7.4" fill="#fff" stroke="#4A4A4A" stroke-width="0.8"/><path d="M2 4.2L4 5.9L2 7.6M2 5.9H1.4" fill="none" stroke="#4A4A4A" stroke-width="0.8"/><path d="M6.8 4.4h2.4M6.8 6h2.4" stroke="#4A4A4A" stroke-width="0.6"/></svg>
<span class="tt" style="left:62.0px;letter-spacing:-0.097px;">String.gu-IN.resx</span>
</div>
<div class="tr" style="left:0;top:195.46px;">
<svg style="left:59.9px;top:1.49px" width="11" height="10" viewBox="0 0 11 10"><path d="M2.4 2h4.4l2.2 2.2v4.8h-6.6z" fill="#fff" stroke="#2B2B2B" stroke-width="0.8"/><path d="M6.6 2v2.4h2.4" fill="none" stroke="#2B2B2B" stroke-width="0.6"/><rect x="0" y="0" width="4.9" height="3.9" fill="#fff"/><path d="M0.2 1.9h3.8M2.4 0.2L4.2 1.9L2.4 3.6" fill="none" stroke="#1560BD" stroke-width="1.25"/></svg>
<span class="tt" style="left:75.0px;letter-spacing:-0.067px;">String.gu-IN.designer.cs</span>
</div>
<div class="tr" style="left:0;top:208.43px;">
<div class="fa" style="left:33.2px;top:4.49px"></div>
<svg style="left:46.9px;top:1.49px" width="11" height="10" viewBox="0 0 11 10"><path d="M4.4 0.8h4l2.2 2.2v5.4h-6.2z" fill="#fff" stroke="#4A4A4A" stroke-width="0.8"/><path d="M8.2 0.8v2.4h2.4" fill="none" stroke="#4A4A4A" stroke-width="0.6"/><rect x="0.5" y="2.2" width="5" height="7.4" fill="#fff" stroke="#4A4A4A" stroke-width="0.8"/><path d="M2 4.2L4 5.9L2 7.6M2 5.9H1.4" fill="none" stroke="#4A4A4A" stroke-width="0.8"/><path d="M6.8 4.4h2.4M6.8 6h2.4" stroke="#4A4A4A" stroke-width="0.6"/></svg>
<span class="tt" style="left:62.0px;letter-spacing:-0.089px;">String.mr-IN.resx</span>
</div>
<div class="tr" style="left:0;top:221.40px;">
<svg style="left:59.9px;top:1.49px" width="11" height="10" viewBox="0 0 11 10"><path d="M2.4 2h4.4l2.2 2.2v4.8h-6.6z" fill="#fff" stroke="#2B2B2B" stroke-width="0.8"/><path d="M6.6 2v2.4h2.4" fill="none" stroke="#2B2B2B" stroke-width="0.6"/><rect x="0" y="0" width="4.9" height="3.9" fill="#fff"/><path d="M0.2 1.9h3.8M2.4 0.2L4.2 1.9L2.4 3.6" fill="none" stroke="#1560BD" stroke-width="1.25"/></svg>
<span class="tt" style="left:75.0px;letter-spacing:-0.057px;">String.mr-IN.designer.cs</span>
</div>
<div class="tr" style="left:0;top:234.37px;">
<div class="fa" style="left:33.2px;top:4.49px"></div>
<svg style="left:46.9px;top:1.49px" width="11" height="10" viewBox="0 0 11 10"><path d="M4.4 0.8h4l2.2 2.2v5.4h-6.2z" fill="#fff" stroke="#4A4A4A" stroke-width="0.8"/><path d="M8.2 0.8v2.4h2.4" fill="none" stroke="#4A4A4A" stroke-width="0.6"/><rect x="0.5" y="2.2" width="5" height="7.4" fill="#fff" stroke="#4A4A4A" stroke-width="0.8"/><path d="M2 4.2L4 5.9L2 7.6M2 5.9H1.4" fill="none" stroke="#4A4A4A" stroke-width="0.8"/><path d="M6.8 4.4h2.4M6.8 6h2.4" stroke="#4A4A4A" stroke-width="0.6"/></svg>
<span class="tt" style="left:62.0px;letter-spacing:-0.143px;">String.te-IN.resx</span>
</div>
<div class="tr" style="left:0;top:247.34px;">
<svg style="left:59.9px;top:1.49px" width="11" height="10" viewBox="0 0 11 10"><path d="M2.4 2h4.4l2.2 2.2v4.8h-6.6z" fill="#fff" stroke="#2B2B2B" stroke-width="0.8"/><path d="M6.6 2v2.4h2.4" fill="none" stroke="#2B2B2B" stroke-width="0.6"/><rect x="0" y="0" width="4.9" height="3.9" fill="#fff"/><path d="M0.2 1.9h3.8M2.4 0.2L4.2 1.9L2.4 3.6" fill="none" stroke="#1560BD" stroke-width="1.25"/></svg>
<span class="tt" style="left:75.0px;letter-spacing:-0.095px;">String.te-IN.designer.cs</span>
</div>
<div class="tr" style="left:0;top:260.31px;">
<svg style="left:33.5px;top:2.99px" width="5" height="8" viewBox="0 0 5 8"><path d="M0.5 0.5L3.8 3.6L0.5 6.7z" fill="#fff" stroke="#3A3A3A" stroke-width="0.8"/></svg>
<svg style="left:46.9px;top:1.49px" width="11" height="10" viewBox="0 0 11 10"><path d="M4.4 0.8h4l2.2 2.2v5.4h-6.2z" fill="#fff" stroke="#4A4A4A" stroke-width="0.8"/><path d="M8.2 0.8v2.4h2.4" fill="none" stroke="#4A4A4A" stroke-width="0.6"/><rect x="0.5" y="2.2" width="5" height="7.4" fill="#fff" stroke="#4A4A4A" stroke-width="0.8"/><path d="M2 4.2L4 5.9L2 7.6M2 5.9H1.4" fill="none" stroke="#4A4A4A" stroke-width="0.8"/><path d="M6.8 4.4h2.4M6.8 6h2.4" stroke="#4A4A4A" stroke-width="0.6"/></svg>
<span class="tt" style="left:62.0px;letter-spacing:-0.298px;">Strings.en-US.resx</span>
</div>
<div class="tr" style="left:0;top:273.28px;">
<svg style="left:33.5px;top:2.99px" width="5" height="8" viewBox="0 0 5 8"><path d="M0.5 0.5L3.8 3.6L0.5 6.7z" fill="#fff" stroke="#3A3A3A" stroke-width="0.8"/></svg>
<svg style="left:46.9px;top:1.49px" width="11" height="10" viewBox="0 0 11 10"><path d="M4.4 0.8h4l2.2 2.2v5.4h-6.2z" fill="#fff" stroke="#4A4A4A" stroke-width="0.8"/><path d="M8.2 0.8v2.4h2.4" fill="none" stroke="#4A4A4A" stroke-width="0.6"/><rect x="0.5" y="2.2" width="5" height="7.4" fill="#fff" stroke="#4A4A4A" stroke-width="0.8"/><path d="M2 4.2L4 5.9L2 7.6M2 5.9H1.4" fill="none" stroke="#4A4A4A" stroke-width="0.8"/><path d="M6.8 4.4h2.4M6.8 6h2.4" stroke="#4A4A4A" stroke-width="0.6"/></svg>
<span class="tt" style="left:62.0px;letter-spacing:-0.138px;">Strings.hi-IN.resx</span>
</div>
<div class="tr" style="left:0;top:286.25px;">
<div class="fa" style="left:33.2px;top:4.49px"></div>
<svg style="left:46.9px;top:1.49px" width="11" height="10" viewBox="0 0 11 10"><path d="M4.4 0.8h4l2.2 2.2v5.4h-6.2z" fill="#fff" stroke="#4A4A4A" stroke-width="0.8"/><path d="M8.2 0.8v2.4h2.4" fill="none" stroke="#4A4A4A" stroke-width="0.6"/><rect x="0.5" y="2.2" width="5" height="7.4" fill="#fff" stroke="#4A4A4A" stroke-width="0.8"/><path d="M2 4.2L4 5.9L2 7.6M2 5.9H1.4" fill="none" stroke="#4A4A4A" stroke-width="0.8"/><path d="M6.8 4.4h2.4M6.8 6h2.4" stroke="#4A4A4A" stroke-width="0.6"/></svg>
<span class="tt" style="left:62.0px;letter-spacing:-0.303px;">Strings.resx</span>
</div>
<div class="tr" style="left:0;top:299.22px;">
<svg style="left:46.5px;top:2.99px" width="5" height="8" viewBox="0 0 5 8"><path d="M0.5 0.5L3.8 3.6L0.5 6.7z" fill="#fff" stroke="#3A3A3A" stroke-width="0.8"/></svg>
<svg style="left:59.9px;top:1.49px" width="11" height="10" viewBox="0 0 11 10"><path d="M2.4 2h4.4l2.2 2.2v4.8h-6.6z" fill="#fff" stroke="#2B2B2B" stroke-width="0.8"/><path d="M6.6 2v2.4h2.4" fill="none" stroke="#2B2B2B" stroke-width="0.6"/><rect x="0" y="0" width="4.9" height="3.9" fill="#fff"/><path d="M0.2 1.9h3.8M2.4 0.2L4.2 1.9L2.4 3.6" fill="none" stroke="#1560BD" stroke-width="1.25"/></svg>
<span class="tt" style="left:75.0px;letter-spacing:-0.212px;">Strings.Designer.cs</span>
</div>
<div class="tr" style="left:0;top:312.19px;">
<svg style="left:20.4px;top:2.99px" width="5" height="8" viewBox="0 0 5 8"><path d="M0.5 0.5L3.8 3.6L0.5 6.7z" fill="#fff" stroke="#3A3A3A" stroke-width="0.8"/></svg>
<svg style="left:33.8px;top:1.49px" width="11" height="10" viewBox="0 0 11 10"><path d="M1.1 1.9h5.6l0.9-1.1h3.3v7.9h-9.8z" fill="#DCB67A"/><path d="M1.1 2.4h9.8" stroke="#CBA468" stroke-width="0.5"/></svg>
<span class="tt" style="left:48.9px;letter-spacing:-0.275px;">App_Start</span>
</div>
<div class="tr" style="left:0;top:325.16px;">
<div class="fa" style="left:20.1px;top:4.49px"></div>
<svg style="left:33.8px;top:1.49px" width="11" height="10" viewBox="0 0 11 10"><path d="M1.1 2.3h5.6l0.9-1h2.4v1.8h-6.6l-2.3 4.6z" fill="#DCB67A"/><path d="M3.6 3.4h7.2v4.7h-9.5z" fill="#FBF6EC" stroke="#DCB67A" stroke-width="0.8"/></svg>
<span class="tt" style="left:48.9px;letter-spacing:0.076px;">Content</span>
</div>
<div class="tr" style="left:0;top:338.13px;">
<svg style="left:46.9px;top:1.49px" width="11" height="10" viewBox="0 0 11 10"><path d="M2.5 1.4h4.2l2.4 2.4v5.4h-6.6z" fill="#fff" stroke="#3A3A3A" stroke-width="0.9"/><path d="M6.5 1.4v2.6h2.6" fill="none" stroke="#3A3A3A" stroke-width="0.7"/></svg>
<span class="tt" style="left:62.0px;">bootstrap.css</span>
</div>
</div>
<div class="a" style="left:761px;top:477.9px;width:214px;height:14px;background:#4D6082;"></div>
<div class="a" style="left:761px;top:477.9px;width:56.2px;height:14px;background:#fff;"></div>
<span class="t " style="left:765.2px;top:478.95px;letter-spacing:-0.243px;color:#1E1E1E">Solution Ex...</span>
<span class="t w" style="left:822px;top:478.95px;letter-spacing:-0.334px;">Team Explo...</span>
<span class="t w" style="left:878px;top:478.95px;letter-spacing:-0.191px;">Properties</span>
<span class="t w" style="left:923.6px;top:478.95px;letter-spacing:0.090px;">Notifications</span>
<span class="t w" style="left:2.7px;top:497.45px;letter-spacing:-0.338px;">Find Results 1</span>
<div class="a" style="left:2.6px;top:510.1px;width:51.2px;height:4.3px;background:#465A7D;"></div>
<div class="a" style="left:0px;top:514.3px;width:975px;height:16.5px;background:#CA5100;"></div>
<span class="t w" style="left:1.1px;top:518.05px;letter-spacing:-0.605px;">Ready</span>
<span class="t w" style="left:433.8px;top:518.05px;letter-spacing:-0.330px;">Ln 26</span>
<span class="t w" style="left:499.8px;top:518.05px;letter-spacing:-0.254px;">Col 54</span>
<span class="t w" style="left:565.9px;top:518.05px;letter-spacing:-0.397px;">Ch 54</span>
<span class="t w" style="left:663.5px;top:518.05px;letter-spacing:-0.495px;">INS</span>
<svg style="left:917.4px;top:518.8px" width="7" height="8" viewBox="0 0 7 8"><path d="M3.5 8V1.2M0.6 3.9L3.5 0.9L6.4 3.9" fill="none" stroke="#fff" stroke-width="1.4"/></svg>
<span class="t w" style="left:931px;top:518.05px;letter-spacing:-0.100px;">Publish</span>
<div class="a" style="left:964.2px;top:521px;width:0;height:0;border-left:2.8px solid transparent;border-right:2.8px solid transparent;border-bottom:3px solid #fff"></div>
<div class="a" style="left:0px;top:530.8px;width:975px;height:3.2px;background:#0A0A0A;"></div>
<div class="a" style="left:275px;top:530.8px;width:48.5px;height:3.2px;background:#8A4216;"></div>
<div class="a" style="left:324.5px;top:530.8px;width:48px;height:3.2px;background:#4A4A4C;"></div>
</body></html>
